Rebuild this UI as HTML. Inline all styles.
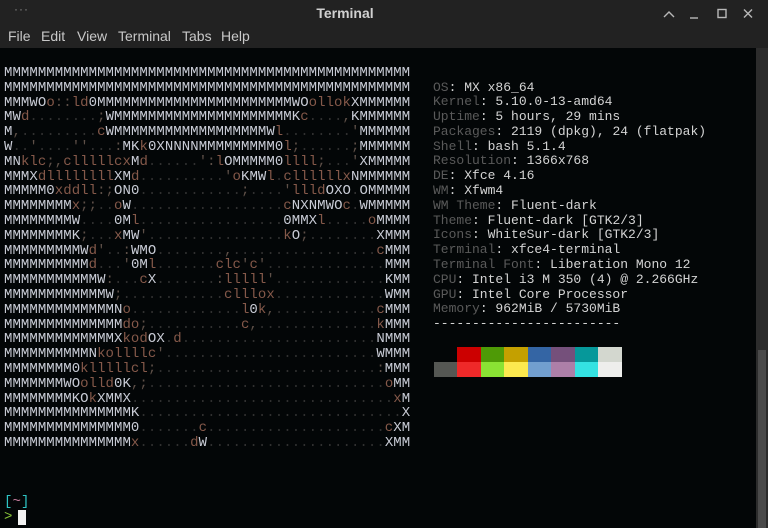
<!DOCTYPE html>
<html><head><meta charset="utf-8">
<style>
html,body{margin:0;padding:0;width:768px;height:528px;overflow:hidden;background:#222;}
body{position:relative;font-family:"Liberation Sans",sans-serif;}
#title{position:absolute;left:0;top:0;width:768px;height:25px;background:#222;}
#title .t{position:absolute;left:0;width:690px;text-align:center;top:5px;color:#d0d0d0;font-size:14px;font-weight:bold;}
#title .dots{position:absolute;left:14px;top:2px;color:#888;font-size:12px;letter-spacing:1px}
#menu{position:absolute;top:28px;left:8px;color:#c8c8c8;font-size:14px;word-spacing:0}
#menu span{position:absolute;top:0}
#term{position:absolute;left:0;top:48px;width:756px;height:480px;background:#030607;}
#sb{position:absolute;left:756px;top:48px;width:12px;height:480px;background:#2c2c2c;}
#sb div{position:absolute;left:2px;top:302px;width:8px;height:178px;background:#4a4a4a;}
pre{margin:0;font-family:"Liberation Mono",monospace;font-size:14px;line-height:14.8px;letter-spacing:0.06px;position:absolute;white-space:pre;}
#art{left:4px;top:66px;}
#info{left:433px;top:80.5px;color:#d4d4d4;font-size:13px;letter-spacing:0}
#info b{font-weight:normal;color:#5a5a5a}
.sw{position:absolute;width:23.5px;height:15px}
</style></head><body>
<div id="title"><span class="dots">···</span><div class="t">Terminal</div>
<svg style="position:absolute;left:661px;top:6px" width="110" height="16" viewBox="0 0 110 16" fill="none" stroke="#b8b8b8" stroke-width="1.4">
<path d="M3 11 L8 6 L13 11"/><path d="M29 12 H37"/><rect x="57" y="3.5" width="8" height="8"/><path d="M83 3.5 L91 11.5 M91 3.5 L83 11.5"/></svg>
</div>
<div id="menu"><span style="left:0">File</span><span style="left:33px">Edit</span><span style="left:69px">View</span><span style="left:110px">Terminal</span><span style="left:174px">Tabs</span><span style="left:213px">Help</span></div>
<div id="term"></div>
<div id="sb"><div></div></div>
<pre id="art"></pre>
<pre id="info"><b>OS</b>: MX x86_64
<b>Kernel</b>: 5.10.0-13-amd64
<b>Uptime</b>: 5 hours, 29 mins
<b>Packages</b>: 2119 (dpkg), 24 (flatpak)
<b>Shell</b>: bash 5.1.4
<b>Resolution</b>: 1366x768
<b>DE</b>: Xfce 4.16
<b>WM</b>: Xfwm4
<b>WM Theme</b>: Fluent-dark
<b>Theme</b>: Fluent-dark [GTK2/3]
<b>Icons</b>: WhiteSur-dark [GTK2/3]
<b>Terminal</b>: xfce4-terminal
<b>Terminal Font</b>: Liberation Mono 12
<b>CPU</b>: Intel i3 M 350 (4) @ 2.266GHz
<b>GPU</b>: Intel Core Processor
<b>Memory</b>: 962MiB / 5730MiB
------------------------</pre>
<div id="sw"></div>
<pre style="left:4px;top:495px"><span style="color:#2ec4c4">[</span><span style="color:#c07a9a">~</span><span style="color:#2ec4c4">]</span>
<span style="color:#8ac63a">&gt;</span></pre>
<div style="position:absolute;left:18px;top:510px;width:8px;height:15px;background:#f2f2f2"></div>
<script>
function r(s,n){return s.repeat(n);}
var M=function(n){return r("M",n)},D=function(n){return r(".",n)};
var rows=[
M(48),M(48),
"MMMWOo::ld0"+M(23)+"WOollokX"+M(6),
"MWd"+D(8)+";W"+M(21)+"Kc"+D(4)+",KMMMMMM",
"M,"+D(9)+"cW"+M(18)+"Wl"+D(8)+"'"+M(6),
"W..'....''...:MKk0XNNNN"+M(9)+"0l;"+D(6)+";"+M(6),
"MNklc;,clllllcxMd"+D(6)+"':lO"+M(5)+"0llll;"+D(3)+"'XMMMMM",
"MMMXdllllllllXMd"+D(10)+"'oKMWl."+"cllllllx"+"NMMMMMM",
"MMMMM0xddll:;ON0"+D(12)+";"+D(4)+"'llldOXO.OMMMMM",
"MMMMMMMMx;;"+D(2)+"oW"+D(18)+"cNXNMWOc."+"WMMMMM",
"MMMMMMMMW"+D(4)+"0Ml"+D(17)+"0MMXl"+D(5)+"oMMMM",
"MMMMMMMMK;"+D(3)+"xMW'"+D(16)+"kO;"+D(8)+"XMMM",
"MMMMMMMMMWd'"+D(2)+":WMO"+D(8)+","+D(17)+"cMMM",
"MMMMMMMMMMd"+D(3)+"'0Ml"+D(7)+"clc'c'"+D(14)+"MMM",
M(11)+"W:"+D(3)+"cX"+D(7)+":lllll'"+D(13)+"KMM",
M(12)+"W;"+D(12)+"clllox"+D(13)+"WMM",
M(13)+"No"+D(13)+"l0k,"+D(12)+"cMMM",
M(14)+"do;"+D(11)+"c,"+D(14)+"kMMM",
M(13)+"XkodOX"+"."+"d"+D(23)+"NMMM",
M(10)+"Nkollllc'"+D(25)+"WMMM",
M(8)+"0klllllcl;"+D(26)+":MMM",
M(7)+"WOolld0K,;"+D(28)+"oMM",
M(8)+"KOkXMMX"+D(31)+"xM",
M(15)+"K"+D(31)+"X",
M(15)+"0"+D(7)+"c"+D(21)+"cXM",
M(15)+"x"+D(6)+"dW"+D(21)+"XMM"
];
function col(c){
 if(c==".")return "#303030";
 if(/[A-Z0-9]/.test(c))return "#c9ccd6";
 if(/[a-z]/.test(c))return "#85594a";
 return "#5e5048";
}
var h="";
rows.forEach(function(s){
 var out="",cur=null,buf="";
 for(var i=0;i<s.length;i++){var c=s[i],k=col(c);
  if(k!==cur){if(buf)out+='<span style="color:'+cur+'">'+buf+'</span>';buf="";cur=k;}
  buf+=c;}
 if(buf)out+='<span style="color:'+cur+'">'+buf+'</span>';
 h+=out+"\n";
});
document.getElementById("art").innerHTML=h;
var top1=["","#cc0000","#4e9a06","#c4a000","#3465a4","#75507b","#06989a","#d3d7cf"];
var bot=["#555753","#ef2929","#8ae234","#fce94f","#729fcf","#ad7fa8","#34e2e2","#eeeeec"];
var sw="";
for(var i=0;i<8;i++){var x=433.5+i*23.5;
 if(top1[i])sw+='<div class="sw" style="left:'+x+'px;top:347px;background:'+top1[i]+'"></div>';
 sw+='<div class="sw" style="left:'+x+'px;top:362px;background:'+bot[i]+'"></div>';}
document.getElementById("sw").innerHTML=sw;
</script>
</body></html>
